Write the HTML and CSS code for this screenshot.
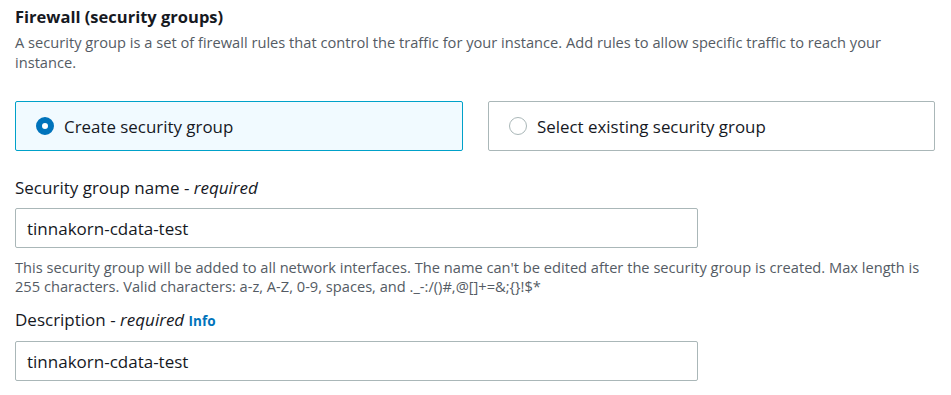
FILE: index.html
```html
<!DOCTYPE html>
<html>
<head>
<meta charset="utf-8">
<link rel="stylesheet" href="styles.css">
</head>
<body>
<div class="section">
  <h2 class="title">Firewall (security groups)</h2>
  <p class="desc">A security group is a set of firewall rules that control the traffic for your instance. Add rules to allow specific traffic to reach your instance.</p>
  <div class="tiles">
    <div class="tile selected">
      <span class="radio on"></span>
      <span class="tile-label">Create security group</span>
    </div>
    <div class="tile">
      <span class="radio"></span>
      <span class="tile-label">Select existing security group</span>
    </div>
  </div>
  <div class="field first">
    <div class="label">Security group name - <em>required</em></div>
    <div class="input">tinnakorn-cdata-test</div>
    <p class="help">This security group will be added to all network interfaces. The name can't be edited after the security group is created. Max length is 255 characters. Valid characters: a-z, A-Z, 0-9, spaces, and ._-:/()#,@[]+=&amp;;{}!$*</p>
  </div>
  <div class="field">
    <div class="label">Description - <em>required</em> <a class="info">Info</a></div>
    <div class="input">tinnakorn-cdata-test</div>
  </div>
</div>
</body>
</html>
```
FILE: styles.css
```css
html, body {
  margin: 0;
  padding: 0;
  background: #ffffff;
}
body {
  font-family: "Open Sans", "Noto Sans", sans-serif;
  color: #16191f;
}
.section {
  width: 920px;
  padding: 6px 0 0 15px;
}
.title {
  margin: 0;
  font-size: 16.5px;
  line-height: 22px;
  font-weight: 700;
  color: #16191f;
}
.desc {
  margin: 4px 0 0;
  font-size: 14.65px;
  line-height: 20px;
  color: #545b64;
  padding-right: 30px;
}
.tiles {
  display: grid;
  grid-template-columns: 448px 447px;
  column-gap: 25px;
  margin-top: 29px;
}
.tile {
  box-sizing: border-box;
  height: 50px;
  border: 1px solid #aab7b8;
  border-radius: 2px;
  display: flex;
  align-items: center;
  padding-left: 20px;
  background: #fff;
}
.tile.selected {
  border-color: #00a1c9;
  background: #f1faff;
}
.radio {
  box-sizing: border-box;
  width: 18px;
  height: 18px;
  border-radius: 50%;
  border: 1.5px solid #aab7b8;
  background: #fff;
  margin-right: 10px;
  flex: none;
}
.radio.on {
  border: 6px solid #0073bb;
}
.tile-label {
  font-size: 16.9px;
  color: #16191f;
}
.field.first {
  margin-top: 27px;
}
.field {
  margin-top: 14px;
}
.label {
  font-size: 17px;
  line-height: 20px;
  color: #16191f;
}
.label em {
  font-style: italic;
}
.info {
  font-size: 13.5px;
  font-weight: 700;
  color: #0073bb;
}
.input {
  box-sizing: border-box;
  margin-top: 10px;
  width: 683px;
  height: 40px;
  border: 1px solid #aab7b8;
  border-radius: 2px;
  padding: 0 11px;
  display: flex;
  align-items: center;
  font-size: 17px;
  color: #16191f;
}
.help {
  margin: 10px 0 0;
  font-size: 14.65px;
  line-height: 19px;
  color: #545b64;
}
```
